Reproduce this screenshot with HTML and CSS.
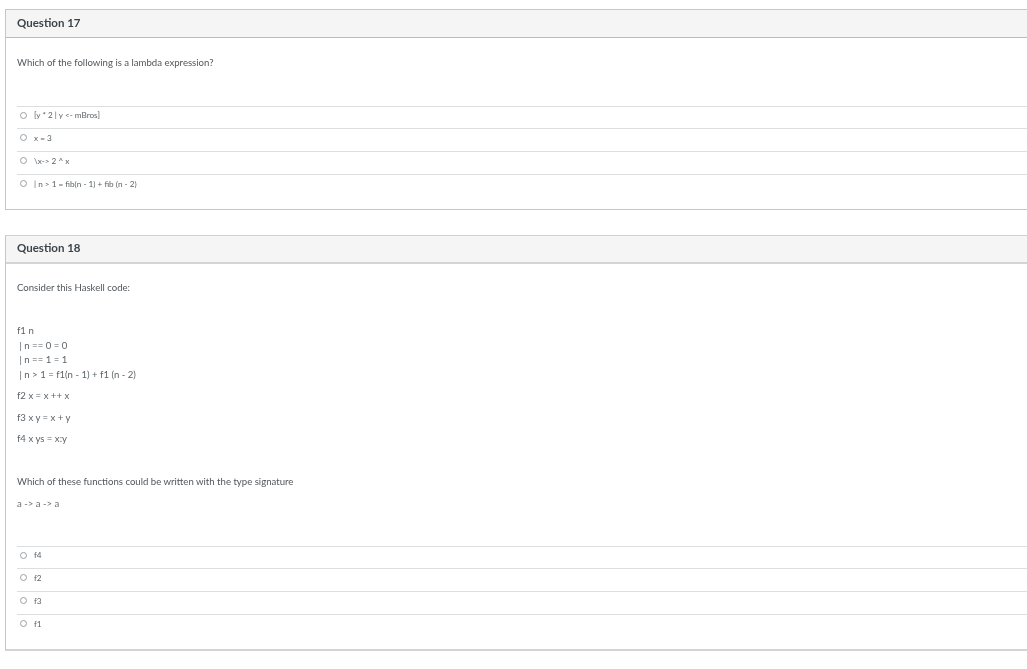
FILE: index.html
```html
<!DOCTYPE html>
<html lang="en">
<head>
<meta charset="utf-8">
<title>Quiz</title>
<link rel="stylesheet" href="styles.css">
</head>
<body>
<main class="quiz">
  <section class="card card-17">
    <header class="card-head"><h2>Question 17</h2></header>
    <div class="card-body">
      <p class="prompt prompt-first">Which of the following is a lambda expression?</p>
      <ul class="answers">
        <li><span class="radio"></span><span>[y * 2 | y &lt;- mBros]</span></li>
        <li><span class="radio"></span><span>x = 3</span></li>
        <li><span class="radio"></span><span>\x-&gt; 2 ^ x</span></li>
        <li><span class="radio"></span><span>| n &gt; 1 = fib(n - 1) + fib (n - 2)</span></li>
      </ul>
    </div>
  </section>
  <section class="card card-18">
    <header class="card-head"><h2>Question 18</h2></header>
    <div class="card-body">
      <p class="prompt prompt-first">Consider this Haskell code:</p>
      <div class="code">
        <p>f1 n<br>&nbsp;| n == 0 = 0<br>&nbsp;| n == 1 = 1<br>&nbsp;| n &gt; 1 = f1(n - 1) + f1 (n - 2)</p>
        <p>f2 x = x ++ x</p>
        <p>f3 x y = x + y</p>
        <p>f4 x ys = x:y</p>
      </div>
      <p class="prompt prompt-second">Which of these functions could be written with the type signature</p>
      <p class="signature">a -&gt; a -&gt; a</p>
      <ul class="answers">
        <li><span class="radio"></span><span>f4</span></li>
        <li><span class="radio"></span><span>f2</span></li>
        <li><span class="radio"></span><span>f3</span></li>
        <li><span class="radio"></span><span>f1</span></li>
      </ul>
    </div>
  </section>
</main>
</body>
</html>
```
FILE: styles.css
```css
* { box-sizing: border-box; }
html, body { margin: 0; padding: 0; height: 100%; overflow: hidden; background: #fff; }
body { font-family: Lato, "Liberation Sans", sans-serif; color: #4a5257; }
.quiz { padding: 9px 0 0 5px; display: flex; flex-direction: column; gap: 25px; filter: blur(0.3px); }
.card { border: 1px solid #c4c7c9; border-right: 0; }
.card-18 { border-top-color: #cfd2d4; border-bottom-width: 2px; border-bottom-color: #d2d4d5; }
.card-head { height: 28px; background: #f5f5f5; border-bottom: 1px solid #b9bcbe; padding: 0 0 2px 11px; display: flex; align-items: center; }
.card-18 .card-head { border-bottom: 2px solid #d3d5d6; }
.card-head h2 { margin: 0; font-size: 11.5px; line-height: 16px; font-weight: 700; color: #3c444a; }
.card-body { padding: 0 0 0 11px; }
.prompt { margin: 0; font-size: 9.6px; line-height: 14px; color: #50575c; }
.prompt-first { padding-top: 18px; }
.card-18 .prompt-first { padding-top: 17px; }
.card-17 .answers { margin-top: 36px; padding-bottom: 12px; }
.code { margin-top: 29px; font-size: 9.6px; line-height: 14.5px; color: #5c6367; }
.code p { margin: 0 0 7px; }
.prompt-second { margin-top: 28px; }
.signature { margin: 8px 0 0; font-size: 9.6px; line-height: 14px; color: #6b7175; }
.card-18 .answers { margin-top: 35px; padding-bottom: 12px; }
.card-18 .answers li { padding-bottom: 4px; }
.answers { list-style: none; margin: 0; padding: 0; }
.answers li { height: 23px; border-top: 1px solid #dcdedf; display: flex; align-items: center; gap: 7px; padding: 0 0 5px 3px; font-size: 8.2px; color: #5c6367; }
.answers li:first-child { height: 22px; }
.radio { width: 7px; height: 7px; flex: none; border: 1px solid #9a9fa3; border-radius: 50%; background: #fff; }
```
